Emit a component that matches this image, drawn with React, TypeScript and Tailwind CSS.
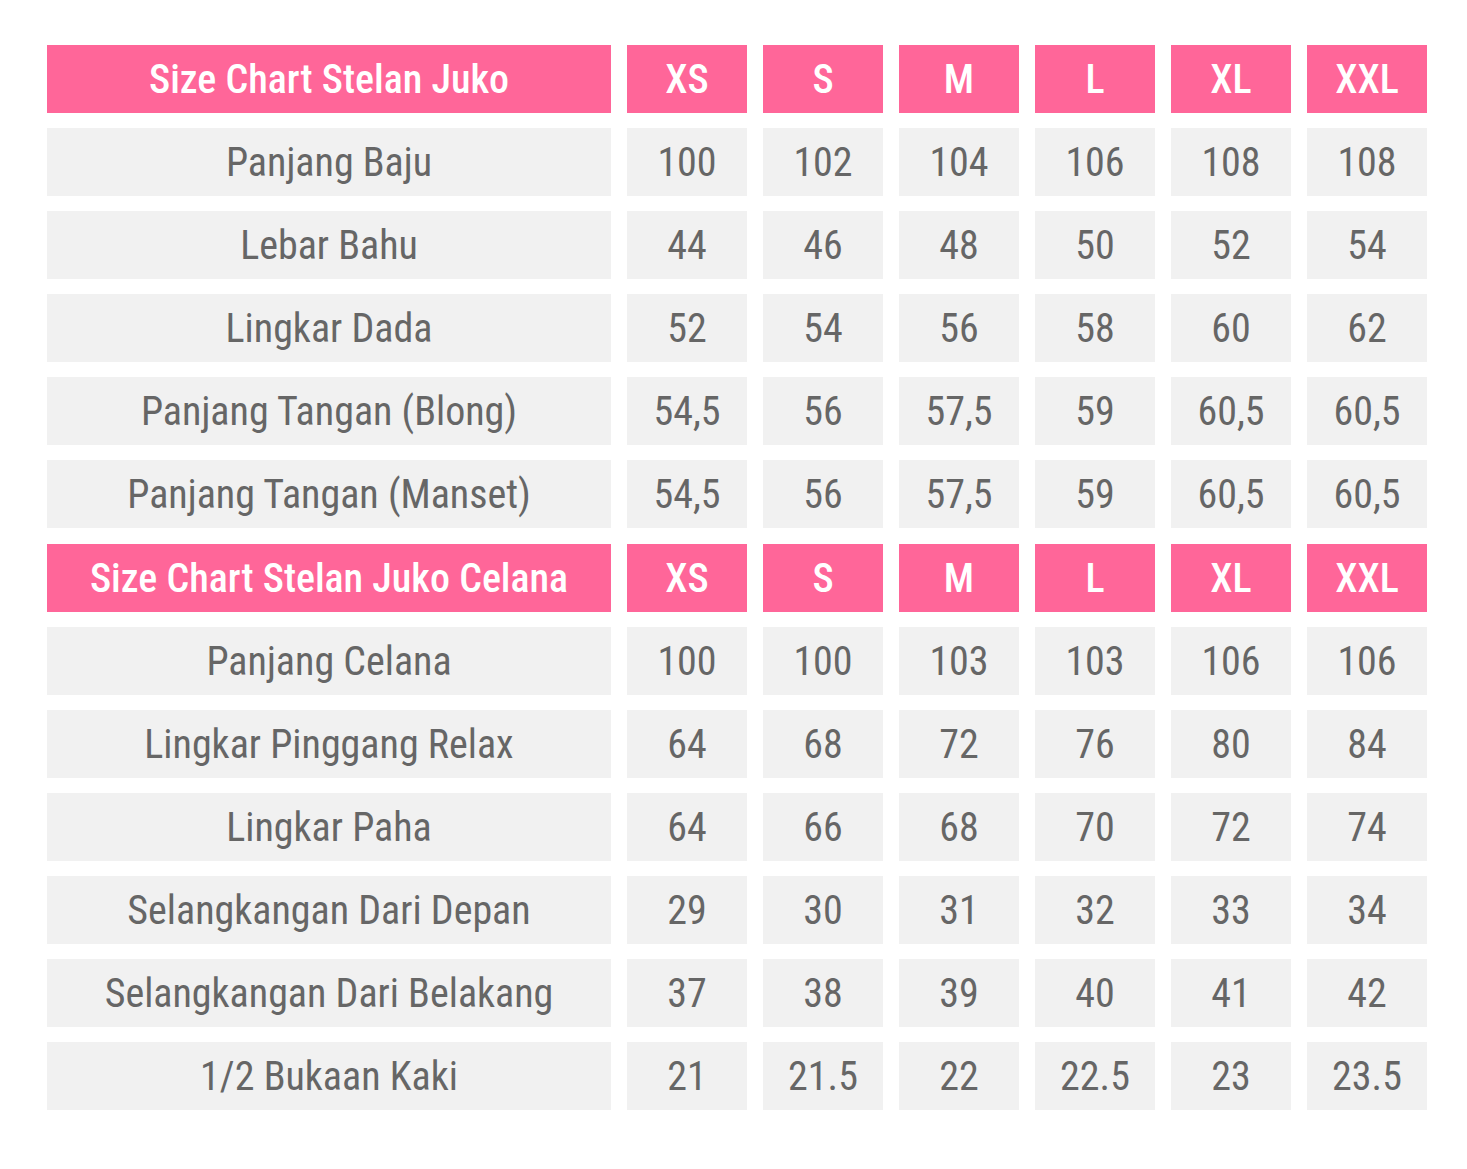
const sizes = ["XS", "S", "M", "L", "XL", "XXL"];

const baju: [string, string[]][] = [
  ["Panjang Baju", ["100", "102", "104", "106", "108", "108"]],
  ["Lebar Bahu", ["44", "46", "48", "50", "52", "54"]],
  ["Lingkar Dada", ["52", "54", "56", "58", "60", "62"]],
  ["Panjang Tangan (Blong)", ["54,5", "56", "57,5", "59", "60,5", "60,5"]],
  ["Panjang Tangan (Manset)", ["54,5", "56", "57,5", "59", "60,5", "60,5"]],
];

const celana: [string, string[]][] = [
  ["Panjang Celana", ["100", "100", "103", "103", "106", "106"]],
  ["Lingkar Pinggang Relax", ["64", "68", "72", "76", "80", "84"]],
  ["Lingkar Paha", ["64", "66", "68", "70", "72", "74"]],
  ["Selangkangan Dari Depan", ["29", "30", "31", "32", "33", "34"]],
  ["Selangkangan Dari Belakang", ["37", "38", "39", "40", "41", "42"]],
  ["1/2 Bukaan Kaki", ["21", "21.5", "22", "22.5", "23", "23.5"]],
];

function HeadRow({ title }: { title: string }) {
  return (
    <>
      <div className="h-[68px] bg-[#ff6699] flex items-center justify-center pt-[2px] text-white font-medium text-[40px]">
        {title}
      </div>
      {sizes.map((s) => (
        <div key={s} className="h-[68px] bg-[#ff6699] flex items-center justify-center pt-[2px] text-white font-medium text-[40px]">
          {s}
        </div>
      ))}
    </>
  );
}

function DataRow({ label, values }: { label: string; values: string[] }) {
  return (
    <>
      <div className="h-[68px] bg-[#f1f1f1] flex items-center justify-center pt-[2px] text-[#666666] text-[40px]">
        {label}
      </div>
      {values.map((v, i) => (
        <div key={i} className="h-[68px] bg-[#f1f1f1] flex items-center justify-center pt-[2px] text-[#666666] text-[40px]">
          {v}
        </div>
      ))}
    </>
  );
}

export default function App() {
  return (
    <div
      className="bg-white w-[1467px] h-[1169px] pt-[45px] pl-[47px] leading-none [font-stretch:condensed]"
      style={{ fontFamily: '"Roboto Condensed", Roboto, "Liberation Sans Narrow", sans-serif' }}
    >
      <div className="grid grid-cols-[564px_repeat(6,120px)] gap-x-4 gap-y-[15.1px]">
        <HeadRow title="Size Chart Stelan Juko" />
        {baju.map(([l, v]) => (
          <DataRow key={l} label={l} values={v} />
        ))}
        <HeadRow title="Size Chart Stelan Juko Celana" />
        {celana.map(([l, v]) => (
          <DataRow key={l} label={l} values={v} />
        ))}
      </div>
    </div>
  );
}
